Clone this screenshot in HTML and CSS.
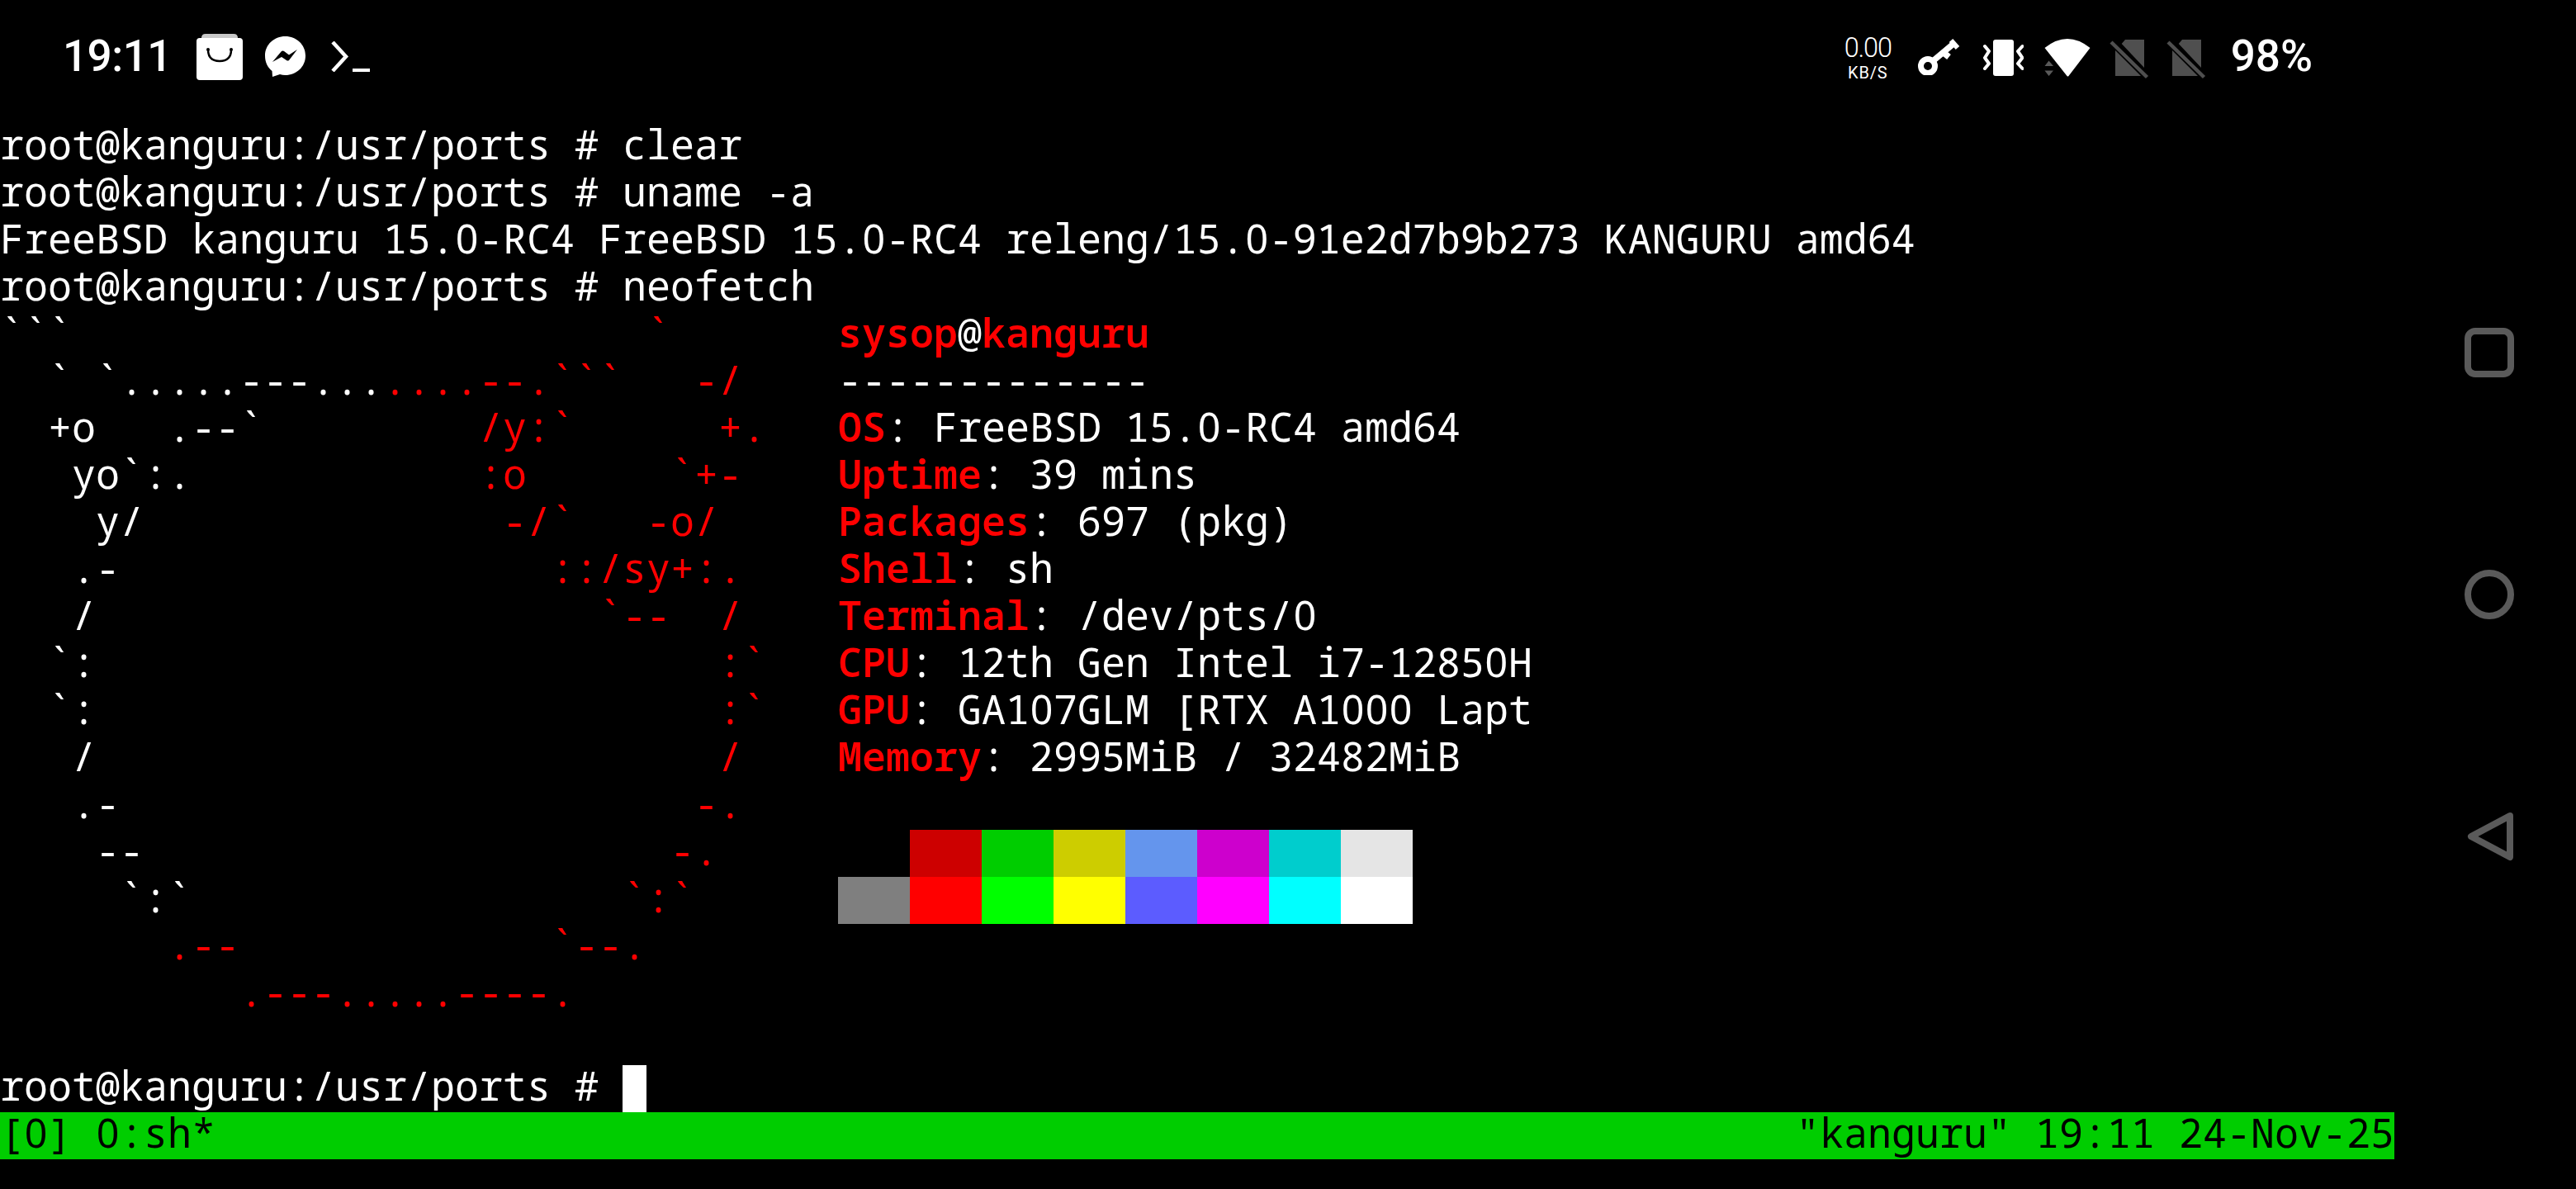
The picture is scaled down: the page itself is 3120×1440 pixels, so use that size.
FILE: index.html
```html
<!DOCTYPE html>
<html lang="en">
<head>
<meta charset="utf-8">
<title>Terminal</title>
<link rel="stylesheet" href="styles.css">
</head>
<body>
<div class="screen">
  <main class="main">
    <header class="status">
      <div class="status-left">
        <span class="clock">19:11</span>
        <svg class="ic-bag" viewBox="0 0 56 56"><path class="lt" d="M6 5 Q6 0 11 0 H45 Q50 0 50 5 Z"/><rect class="wh" x="0" y="5" width="56" height="51" rx="4"/><path class="smile" d="M14 19 Q14 33 28 33 Q42 33 42 19"/><circle class="dot" cx="14" cy="19" r="2"/><circle class="dot" cx="42" cy="19" r="2"/></svg>
        <svg class="ic-msg" viewBox="0 0 49 49"><path class="wh" d="M24.5 0 C38 0 49 10 49 23.5 C49 37 38 47 24.5 47 Q21 47 18 46 L9 49 L8.500 42 C3 37.500 0 31 0 23.500 C0 10 11 0 24.500 0 Z"/><path class="bk" d="M9 31 L20 18 Q21.500 17 23 18 L29 22.500 L39 16 L29 29 Q27.500 30 26 29 L20 25 Z"/></svg>
        <svg class="ic-term" viewBox="0 0 48 37"><path class="line-w" d="M3 1 L19 18.500 L3 36"/><rect class="wh" x="27" y="33" width="21" height="4"/></svg>
      </div>
      <div class="status-right">
        <div class="net"><span class="net-val">0.00</span><span class="net-unit">KB/S</span></div>
        <svg class="ic-key" viewBox="0 0 52 44"><circle class="ring" cx="13" cy="33" r="8.500"/><path class="key-b" d="M19 27 L44 6 M31 16 L38.500 22"/><path class="key-c" d="M41 2 L49 11"/></svg>
        <svg class="ic-vib" viewBox="0 0 49 44"><rect class="wh" x="12" y="0" width="25" height="44" rx="3"/><path class="wave" d="M2 8 L7 14 L2 22 L7 29 L2 35 M47.500 8 L42 14 L47.500 22 L42 29 L47.500 35"/></svg>
        <svg class="ic-wifi" viewBox="0 0 56 46"><path class="wh" d="M0.500 11 Q28 -11 55.500 11 L29.500 45 Q28.500 46 27.500 45 Z"/><path class="dim" d="M5.500 26.500 L11 33 H0.500 Z M0.500 38.500 H11 L5.500 45 Z"/></svg>
        <svg class="ic-sim" viewBox="0 0 46 46"><path class="dim2" d="M18 0 H41 V34 L13.700 5 Z M6 13 V44 H37 Z"/><path class="slash" d="M1 3 L44.500 45.500"/></svg>
        <svg class="ic-sim sim-two" viewBox="0 0 46 46"><path class="dim2" d="M18 0 H41 V34 L13.700 5 Z M6 13 V44 H37 Z"/><path class="slash" d="M1 3 L44.500 45.500"/></svg>
        <span class="batt">98%</span>
      </div>
    </header>
    <section class="term">
      <div class="line">root@kanguru:/usr/ports # clear</div>
      <div class="line">root@kanguru:/usr/ports # uname -a</div>
      <div class="line">FreeBSD kanguru 15.<span class="z">0</span>-RC4 FreeBSD 15.<span class="z">0</span>-RC4 releng/15.<span class="z">0</span>-91e2d7b9b273 KANGURU amd64</div>
      <div class="line">root@kanguru:/usr/ports # neofetch</div>
      <div class="line split"><span class="art">```                        <i>`</i></span><span class="info"><b>sysop</b>@<b>kanguru</b></span></div>
      <div class="line split"><span class="art">  ` `.....---...<i>....--.```   -/</i></span><span class="info">-------------</span></div>
      <div class="line split"><span class="art">  +o   .--`<i>         /y:`      +.</i></span><span class="info"><b>OS</b>: FreeBSD 15.<span class="z">0</span>-RC4 amd64</span></div>
      <div class="line split"><span class="art">   yo`:.<i>            :o      `+-</i></span><span class="info"><b>Uptime</b>: 39 mins</span></div>
      <div class="line split"><span class="art">    y/<i>               -/`   -o/</i></span><span class="info"><b>Packages</b>: 697 (pkg)</span></div>
      <div class="line split"><span class="art">   .-<i>                  ::/sy+:.</i></span><span class="info"><b>Shell</b>: sh</span></div>
      <div class="line split"><span class="art">   /<i>                     `--  /</i></span><span class="info"><b>Terminal</b>: /dev/pts/<span class="z">0</span></span></div>
      <div class="line split"><span class="art">  `:<i>                          :`</i></span><span class="info"><b>CPU</b>: 12th Gen Intel i7-1285<span class="z">0</span>H</span></div>
      <div class="line split"><span class="art">  `:<i>                          :`</i></span><span class="info"><b>GPU</b>: GA1<span class="z">0</span>7GLM [RTX A1<span class="z">0</span><span class="z">0</span><span class="z">0</span> Lapt</span></div>
      <div class="line split"><span class="art">   /<i>                          /</i></span><span class="info"><b>Memory</b>: 2995MiB / 32482MiB</span></div>
      <div class="line split"><span class="art">   .-<i>                        -.</i></span><span class="info"></span></div>
      <div class="line split"><span class="art">    --<i>                      -.</i></span><span class="swatches"><span class="sw c0"></span><span class="sw c1"></span><span class="sw c2"></span><span class="sw c3"></span><span class="sw c4"></span><span class="sw c5"></span><span class="sw c6"></span><span class="sw c7"></span></span></div>
      <div class="line split"><span class="art">     `:`<i>                  `:`</i></span><span class="swatches"><span class="sw c8"></span><span class="sw c9"></span><span class="sw c10"></span><span class="sw c11"></span><span class="sw c12"></span><span class="sw c13"></span><span class="sw c14"></span><span class="sw c15"></span></span></div>
      <div class="line"><span class="art"><i>       .--             `--.</i></span></div>
      <div class="line"><span class="art"><i>          .---.....----.</i></span></div>
      <div class="line"></div>
      <div class="line">root@kanguru:/usr/ports # <span class="cursor"></span></div>
      <div class="line tmux"><span>[<span class="z">0</span>] <span class="z">0</span>:sh*</span><span>"kanguru" 19:11 24-Nov-25</span></div>
    </section>
  </main>
  <nav class="nav">
    <svg class="nav-ic" viewBox="0 0 60 60"><rect x="4" y="4" width="52" height="52" rx="9"/></svg>
    <svg class="nav-ic" viewBox="0 0 60 60"><circle cx="30" cy="30" r="26"/></svg>
    <svg class="nav-ic" viewBox="0 0 60 60"><path d="M55 5 L8 30 L55 55 Z"/></svg>
  </nav>
</div>
</body>
</html>
```

FILE: styles.css
```css
* { box-sizing: border-box; }
html, body { margin: 0; padding: 0; background: #000; }
.screen { width: 3120px; height: 1440px; display: flex; background: #000; color: #fff; overflow: hidden; }
.main { width: 2900px; display: flex; flex-direction: column; }

.status { height: 150px; padding: 0 99px 10px 76px; display: flex; align-items: center; justify-content: space-between; font-family: Roboto, "Noto Sans", sans-serif; }
.status-left, .status-right { display: flex; align-items: center; }
.status-left { margin-bottom: 3px; }
.clock { font-size: 53px; width: 127px; margin-right: 35px; letter-spacing: -0.5px; line-height: 1; font-weight: 500; }
.batt { font-size: 53px; margin-left: 31px; font-weight: 500; line-height: 1; margin-bottom: 4px; }
.net { width: 57px; display: flex; flex-direction: column; align-items: center; margin-right: 31px; line-height: 1; }
.net-val { font-size: 32.5px; font-weight: 300; letter-spacing: -1.2px; }
.net-unit { font-size: 20px; margin-top: 4px; letter-spacing: 0.8px; font-weight: 400; }

.wh { fill: #fff; }
.bk { fill: #000; }
.lt { fill: #c8c8c8; }
.dim { fill: #5a5a5a; }
.dim2 { fill: #4f4f4f; }
.dot { fill: #000; }
.smile { fill: none; stroke: #000; stroke-width: 2.5; }
.line-w { fill: none; stroke: #fff; stroke-width: 4.5; }
.ring { fill: none; stroke: #fff; stroke-width: 7; }
.key-b { fill: none; stroke: #fff; stroke-width: 7.5; }
.key-c { fill: none; stroke: #fff; stroke-width: 6; }
.wave { fill: none; stroke: #fff; stroke-width: 4; stroke-linecap: round; stroke-linejoin: round; }
.slash { fill: none; stroke: #4f4f4f; stroke-width: 4.5; }

.ic-bag { width: 56px; height: 56px; margin-right: 27px; }
.ic-msg { width: 49px; height: 49px; margin-right: 30px; }
.ic-term { width: 48px; height: 37px; }
.ic-key { width: 52px; height: 44px; margin-right: 28px; margin-bottom: 3px; }
.ic-vib { width: 49px; height: 44px; margin-right: 25px; }
.ic-wifi { width: 56px; height: 46px; margin-right: 24px; }
.ic-sim { width: 46px; height: 46px; margin-top: 2px; overflow: visible; }
.sim-two { margin-left: 23px; }

.term { height: 1254px; display: grid; grid-template-rows: repeat(22, 57px); font-family: "Noto Sans Mono", "DejaVu Sans Mono", monospace; font-size: 48.33px; }
.line { line-height: 49px; white-space: pre; height: 57px; }
.split { display: grid; grid-template-columns: 1015px 1fr; }
.art, .info { white-space: pre; }
.z { display: inline-block; width: 29px; text-align: center; font-family: "Noto Sans", sans-serif; }
i { font-style: normal; color: #f00; }
b { color: #f00; font-weight: 600; }
.swatches { display: flex; height: 57px; }
.sw { width: 87px; height: 100%; }
.c0 { background: #000; } .c1 { background: #cd0000; } .c2 { background: #00cd00; } .c3 { background: #cdcd00; }
.c4 { background: #6495ed; } .c5 { background: #cd00cd; } .c6 { background: #00cdcd; } .c7 { background: #e5e5e5; }
.c8 { background: #7f7f7f; } .c9 { background: #f00; } .c10 { background: #0f0; } .c11 { background: #ff0; }
.c12 { background: #5c5cff; } .c13 { background: #f0f; } .c14 { background: #0ff; } .c15 { background: #fff; }
.cursor { display: inline-block; width: 29px; height: 57px; background: #fff; vertical-align: top; }
.tmux { background: #00cd00; color: #000; display: flex; justify-content: space-between; }

.nav { flex: 1; display: flex; flex-direction: column; gap: 233px; padding: 397px 0 0 85px; }
.nav-ic { width: 60px; height: 60px; fill: none; stroke: #5a5a5a; stroke-width: 8; stroke-linejoin: round; }
```
